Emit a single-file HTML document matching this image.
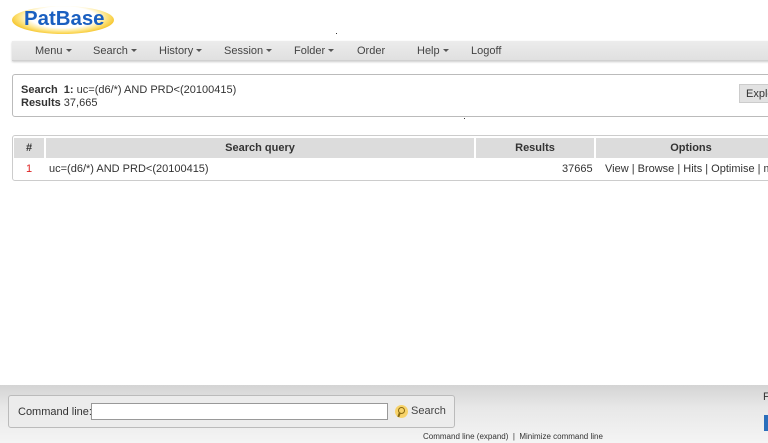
<!DOCTYPE html>
<html><head><meta charset="utf-8"><style>
*{margin:0;padding:0;box-sizing:border-box}
body{width:768px;height:443px;overflow:hidden;background:#fff;font-family:"Liberation Sans",Arial,sans-serif;font-size:11px;color:#333;position:relative}
.abs{position:absolute}
.nav{left:12px;top:41px;width:760px;height:20px;background:linear-gradient(#ececec,#e0e0e0);border-bottom:1px solid #d0d0d0;box-shadow:0 1px 2px #ccc}
.nav span{position:absolute;top:4px;color:#444;font-size:11px;white-space:nowrap}
.car{display:inline-block;width:0;height:0;border-left:3px solid transparent;border-right:3px solid transparent;border-top:3px solid #555;vertical-align:2px;margin-left:3px}
.box{left:12px;top:74px;width:770px;height:43px;border:1px solid #bbb;border-radius:3px}
.tbl{left:12px;top:135px;width:770px;height:46px;border:1px solid #ccc;border-radius:3px}
.th{position:absolute;top:2px;height:20px;background:#dcdcdc;font-weight:bold;text-align:center;line-height:20px;color:#333}
.foot{left:0;top:385px;width:768px;height:58px;background:linear-gradient(#d4d4d4,#e8e8e8 40%,#f4f4f4)}
</style></head><body>
<div class="abs" style="left:12px;top:6px;width:102px;height:28px;border-radius:50%;background:radial-gradient(ellipse at 50% 40%,#fff 45%,#fde27a 62%,#f2b705 80%,#fff 100%)"></div>
<div class="abs" style="left:24px;top:8px;font-size:20px;font-weight:bold;color:#1a5fc0;transform:scaleX(1.02);transform-origin:left">PatBase</div>
<div class="abs" style="left:336px;top:33px;width:1px;height:1px;background:#333"></div>
<div class="abs nav">
<span style="left:23px">Menu<i class="car"></i></span>
<span style="left:81px">Search<i class="car"></i></span>
<span style="left:147px">History<i class="car"></i></span>
<span style="left:212px">Session<i class="car"></i></span>
<span style="left:282px">Folder<i class="car"></i></span>
<span style="left:345px">Order</span>
<span style="left:405px">Help<i class="car"></i></span>
<span style="left:459px">Logoff</span>
</div>
<div class="abs box">
<div class="abs" style="left:8px;top:9px;line-height:13px"><b>Search &nbsp;1:</b> uc=(d6/*) AND PRD&lt;(20100415)<br><b>Results</b> 37,665</div>
<div class="abs" style="left:726px;top:9px;width:50px;height:19px;background:#e2e2e2;border:1px solid #ccc;padding:3px 0 0 6px;font-size:11px">Explore</div>
</div>
<div class="abs" style="left:464px;top:118px;width:1px;height:1px;background:#333"></div>
<div class="abs tbl">
<div class="th" style="left:1px;width:30px">#</div>
<div class="th" style="left:33px;width:428px">Search query</div>
<div class="th" style="left:463px;width:118px">Results</div>
<div class="th" style="left:583px;width:190px">Options</div>
<div class="abs" style="left:13px;top:27px;color:#d22">1</div>
<div class="abs" style="left:36px;top:27px">uc=(d6/*) AND PRD&lt;(20100415)</div>
<div class="abs" style="left:549px;top:27px">37665</div>
<div class="abs" style="left:592px;top:27px;white-space:nowrap">View | Browse | Hits | Optimise | more</div>
</div>
<div class="abs foot">
<div class="abs" style="left:8px;top:10px;width:447px;height:33px;border:1px solid #bbb;border-radius:3px;background:#ececec"></div>
<div class="abs" style="left:18px;top:21px;color:#333">Command line:</div>
<div class="abs" style="left:91px;top:18px;width:297px;height:17px;background:#fff;border:1px solid #999"></div>
<div class="abs" style="left:395px;top:20px;width:13px;height:13px;border-radius:50%;background:#f7d36b"></div>
<div class="abs" style="left:398px;top:22px;width:7px;height:7px;border:1.5px solid #8a6a10;border-radius:50%"></div>
<div class="abs" style="left:398px;top:28px;width:1.5px;height:4px;background:#8a6a10;transform:rotate(20deg)"></div>
<div class="abs" style="left:411px;top:20px;font-size:11px;color:#444">Search</div>
<div class="abs" style="left:423px;top:47px;font-size:8px;color:#333">Command line (expand) &nbsp;| &nbsp;Minimize command line</div>
<div class="abs" style="left:763px;top:6px;color:#333">F</div>
<div class="abs" style="left:764px;top:30px;width:4px;height:16px;background:#2a6ebb"></div>
</div>
</body></html>
